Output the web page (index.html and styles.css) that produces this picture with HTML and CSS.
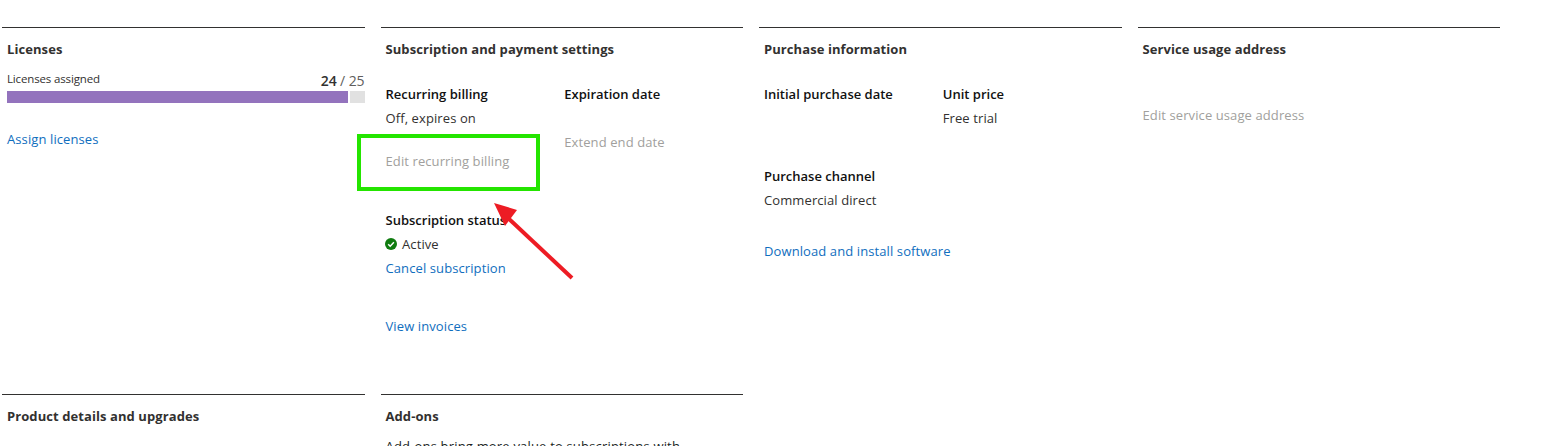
FILE: index.html
```html
<!DOCTYPE html>
<html lang="en">
<head>
<meta charset="utf-8">
<title>Subscription</title>
<link rel="stylesheet" href="styles.css">
</head>
<body>
<main class="grid">
  <section class="card">
    <h2>Licenses</h2>
    <div class="lic-head"><span class="lic-label">Licenses assigned</span><span class="lic-count"><b>24</b> / 25</span></div>
    <div class="bar"><div class="bar-fill"></div><div class="bar-rest"></div></div>
    <a class="link assign" href="#">Assign licenses</a>
  </section>
  <section class="card">
    <h2>Subscription and payment settings</h2>
    <div class="cols">
      <div class="col">
        <h3>Recurring billing</h3>
        <p>Off, expires on</p>
        <span class="disabled edit-billing">Edit recurring billing</span>
      </div>
      <div class="col">
        <h3>Expiration date</h3>
        <span class="disabled extend">Extend end date</span>
      </div>
    </div>
    <h3 class="status-head">Subscription status</h3>
    <p class="status"><svg class="check" viewBox="0 0 12 12" width="12" height="12"><circle cx="6" cy="6" r="6" fill="#107c10"/><path d="M3.2 6.2l2 2 3.7-3.9" fill="none" stroke="#fff" stroke-width="1.5"/></svg>Active</p>
    <a class="link cancel" href="#">Cancel subscription</a>
    <a class="link invoices" href="#">View invoices</a>
  </section>
  <section class="card">
    <h2>Purchase information</h2>
    <div class="cols">
      <div class="col">
        <h3>Initial purchase date</h3>
      </div>
      <div class="col">
        <h3>Unit price</h3>
        <p>Free trial</p>
      </div>
    </div>
    <h3 class="channel-head">Purchase channel</h3>
    <p>Commercial direct</p>
    <a class="link download" href="#">Download and install software</a>
  </section>
  <section class="card">
    <h2>Service usage address</h2>
    <span class="disabled usage">Edit service usage address</span>
  </section>
  <section class="card">
    <h2>Product details and upgrades</h2>
  </section>
  <section class="card">
    <h2>Add-ons</h2>
    <p class="addons">Add-ons bring more value to subscriptions with</p>
  </section>
</main>
<div class="highlight"></div>
<svg class="arrow" viewBox="0 0 90 90" width="90" height="90">
  <path d="M80 77L16 17" stroke="#ed1c24" stroke-width="4" fill="none"/>
  <path d="M2 2L25 9L13 25Z" fill="#ed1c24"/>
</svg>
</body>
</html>
```
FILE: styles.css
```css
html, body {
  margin: 0;
  padding: 0;
  height: 446px;
  overflow: hidden;
  background: #fff;
}
body {
  position: relative;
  font-family: "Open Sans", "Noto Sans", sans-serif;
  font-size: 13px;
  line-height: 24px;
  letter-spacing: 0.1px;
  color: #323130;
}
.grid {
  display: grid;
  grid-template-columns: repeat(4, 362.5px);
  grid-template-rows: 367px 52px;
  column-gap: 16px;
  padding: 27px 0 0 2px;
}
.card {
  border-top: 1px solid #323130;
  padding: 9px 0 0 5px;
  min-width: 0;
}
h2 {
  margin: 0;
  font-size: 13px;
  font-weight: 700;
  line-height: 24px;
  letter-spacing: 0.08px;
}
h3 {
  margin: 0;
  font-size: 13px;
  font-weight: 600;
  line-height: 24px;
  letter-spacing: 0;
  color: #111;
}
p { margin: 0; }
.link { display: block; color: #106ebe; text-decoration: none; }
.disabled { display: block; color: #a19f9d; }
.lic-head {
  display: flex;
  justify-content: space-between;
  align-items: flex-end;
  margin-top: 5px;
  height: 25px;
}
.lic-label { font-size: 11.5px; line-height: 20px; letter-spacing: -0.15px; padding-bottom: 2px; }
.lic-count { font-size: 14px; line-height: 20px; color: #605e5c; letter-spacing: -0.1px; }
.lic-count b { font-weight: 600; color: #323130; }
.bar { display: flex; height: 12px; gap: 2.5px; }
.bar-fill { width: 340.5px; background: #9373bd; }
.bar-rest { flex: 1; background: #e1e1e1; }
.assign { margin-top: 24px; }
.cols { display: flex; margin-top: 21px; }
.col { width: 179px; }
.edit-billing { margin-top: 19px; }
.extend { margin-top: 24px; }
.status-head { margin-top: 35px; }
.status { display: flex; align-items: center; gap: 5.5px; margin-left: -1px; }
.invoices { margin-top: 34px; }
.channel-head { margin-top: 34px; }
.download { margin-top: 27px; }
.usage { margin-top: 42px; }
.addons { margin-top: 6px; color: #201f1e; letter-spacing: 0.18px; }
.highlight {
  position: absolute;
  left: 357px;
  top: 134px;
  width: 183px;
  height: 57px;
  box-sizing: border-box;
  border: 4px solid #24e500;
}
.arrow {
  position: absolute;
  left: 492px;
  top: 201px;
}
```
